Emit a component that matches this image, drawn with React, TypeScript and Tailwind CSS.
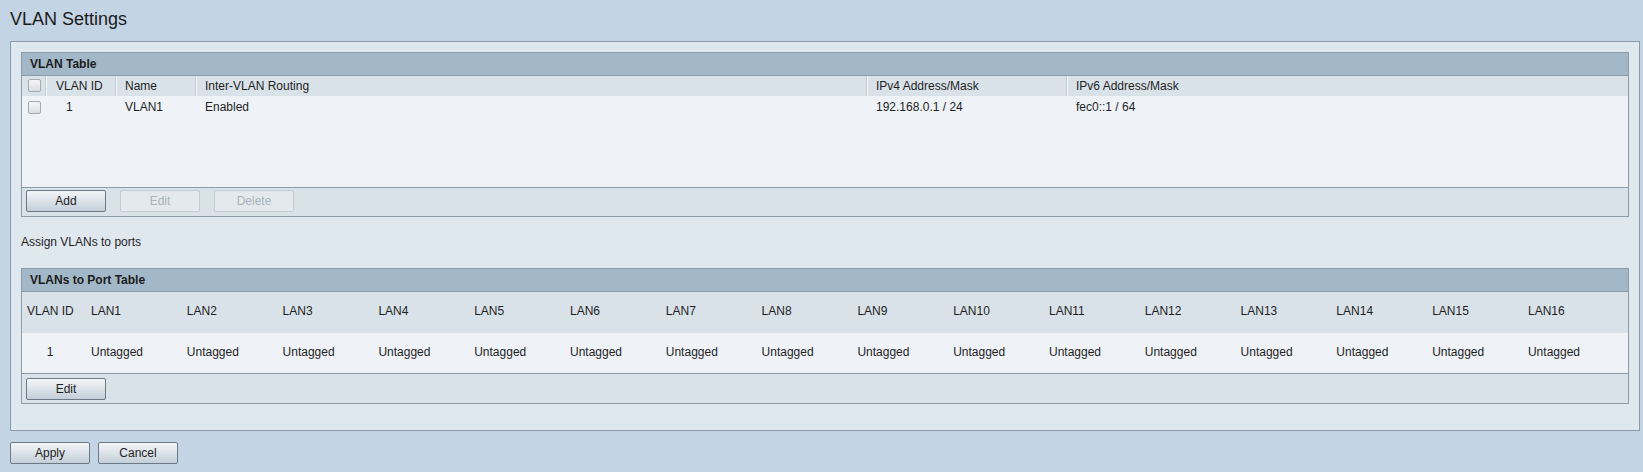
import React from "react";

const border = "border-[#8b9ba8]";

function Checkbox() {
  return (
    <span className="inline-block h-[13px] w-[13px] rounded-[2px] border border-[#a3aab0] bg-gradient-to-b from-[#f4f5f6] to-[#dcdfe2]" />
  );
}

function Button({ label, disabled }: { label: string; disabled?: boolean }) {
  return (
    <button
      type="button"
      className={
        disabled
          ? "h-[22px] w-[80px] rounded-[2px] border border-[#c2ccd4] bg-[#e3e9ee] pb-[1px] text-[12px] text-[#aab3bb]"
          : "h-[22px] w-[80px] rounded-[2px] border border-[#6b7985] bg-gradient-to-b from-[#f3f6f8] to-[#c4cfd9] pb-[1px] text-[12px] text-[#1e1e1e]"
      }
    >
      {label}
    </button>
  );
}

function TableHeader({ title }: { title: string }) {
  return (
    <div className={`flex h-[23px] items-center border-b ${border} bg-[#a2b8c8] pb-[1px] pl-[8px] text-[12px] font-bold text-[#1b1b1b]`}>
      {title}
    </div>
  );
}

const cols = "grid grid-cols-[24px_70px_80px_671px_200px_1fr]";
const divider = "border-l border-[#f6f8fa] shadow-[-1px_0_0_#c3ced7] pl-[8px] pb-[1px]";

const lans = Array.from({ length: 16 }, (_, i) => `LAN${i + 1}`);
const portCols = "grid grid-cols-[63px_repeat(15,95.8px)_1fr]";

export default function App() {
  return (
    <div
      className="h-[472px] w-full bg-[#c3d5e5] text-[12px] text-[#1e1e1e]"
      style={{ fontFamily: '"Liberation Sans", Arial, sans-serif' }}
    >
      <div className="h-[41px] pl-[10px] pt-[10px] text-[18px] leading-[18px] text-[#1a1a1a]">VLAN Settings</div>

      <div className={`ml-[10px] mr-[3px] border ${border} bg-[#e0e8ef] px-[10px] pb-[26px] pt-[10px]`}>
        {/* VLAN Table */}
        <div className={`border ${border}`}>
          <TableHeader title="VLAN Table" />
          <div className={`${cols} h-[20px] items-stretch bg-[#d9e2e9]`}>
            <div className="flex items-center justify-center pb-[1px]">
              <Checkbox />
            </div>
            <div className={`flex items-center ${divider} pl-[9px]`}>VLAN ID</div>
            <div className={`flex items-center ${divider}`}>Name</div>
            <div className={`flex items-center ${divider}`}>Inter-VLAN Routing</div>
            <div className={`flex items-center ${divider}`}>IPv4 Address/Mask</div>
            <div className={`flex items-center ${divider}`}>IPv6 Address/Mask</div>
          </div>
          <div className={`h-[92px] border-b ${border} bg-[#eff3f8]`}>
            <div className={`${cols} h-[22px] items-center`}>
              <div className="flex items-center justify-center">
                <Checkbox />
              </div>
              <div className="pl-[20px]">1</div>
              <div className="pl-[9px]">VLAN1</div>
              <div className="pl-[9px]">Enabled</div>
              <div className="pl-[9px]">192.168.0.1 / 24</div>
              <div className="pl-[9px]">fec0::1 / 64</div>
            </div>
          </div>
          <div className="flex h-[28px] gap-[14px] bg-[#d9e2e9] pl-[4px] pt-[2px]">
            <Button label="Add" />
            <Button label="Edit" disabled />
            <Button label="Delete" disabled />
          </div>
        </div>

        <div className="flex h-[51px] items-center pb-[2px]">Assign VLANs to ports</div>

        {/* VLANs to Port Table */}
        <div className={`border ${border}`}>
          <TableHeader title="VLANs to Port Table" />
          <div className={`${portCols} h-[41px] items-center bg-[#d9e2e9] pb-[3px]`}>
            <div className="pl-[5px]">VLAN ID</div>
            {lans.map((lan) => (
              <div key={lan} className="pl-[6px]">
                {lan}
              </div>
            ))}
          </div>
          <div className={`${portCols} h-[41px] items-center border-b ${border} bg-[#eff3f8] pb-[2px]`}>
            <div className="pr-[7px] text-center">1</div>
            {lans.map((lan) => (
              <div key={lan} className="pl-[6px]">
                Untagged
              </div>
            ))}
          </div>
          <div className="h-[29px] bg-[#d9e2e9] pl-[4px] pt-[4px]">
            <Button label="Edit" />
          </div>
        </div>
      </div>

      <div className="flex gap-[8px] pl-[10px] pt-[11px]">
        <Button label="Apply" />
        <Button label="Cancel" />
      </div>
    </div>
  );
}
